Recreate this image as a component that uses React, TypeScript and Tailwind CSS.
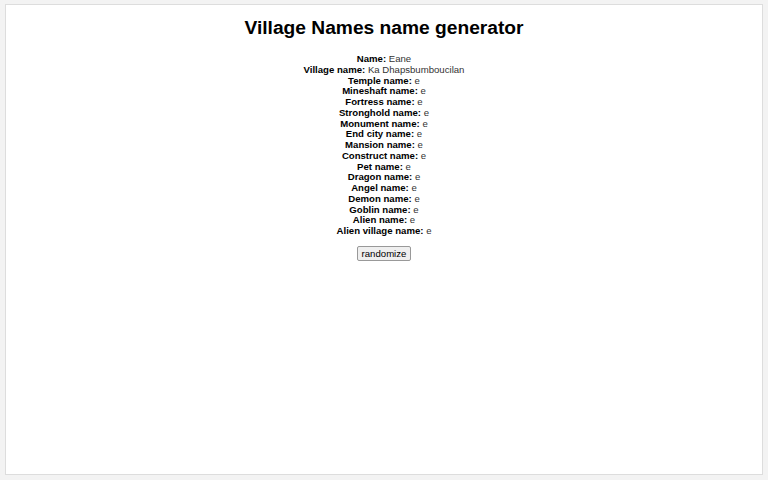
import { useState } from "react";

const fields = [
  "Village name",
  "Temple name",
  "Mineshaft name",
  "Fortress name",
  "Stronghold name",
  "Monument name",
  "End city name",
  "Mansion name",
  "Construct name",
  "Pet name",
  "Dragon name",
  "Angel name",
  "Demon name",
  "Goblin name",
  "Alien name",
  "Alien village name",
];

const syllables = ["ka", "dhaps", "bum", "bou", "ci", "lan", "e", "ane", "tor", "vel"];

function makeName() {
  const n = 2 + Math.floor(Math.random() * 3);
  let s = "";
  for (let i = 0; i < n; i++) s += syllables[Math.floor(Math.random() * syllables.length)];
  return s.charAt(0).toUpperCase() + s.slice(1);
}

export default function App() {
  const [values, setValues] = useState<Record<string, string>>(() => {
    const v: Record<string, string> = { Name: "Eane", "Village name": "Ka Dhapsbumboucilan" };
    fields.slice(1).forEach((f) => (v[f] = "e"));
    return v;
  });

  function randomize() {
    const v: Record<string, string> = { Name: makeName() };
    fields.forEach((f) => (v[f] = makeName()));
    setValues(v);
  }

  return (
    <div className="min-h-screen bg-[#f3f3f3] p-[4px_5px_5px_5px] font-['Liberation_Sans',Arial,sans-serif]">
      <div className="h-[471px] border border-[#dddddd] bg-white text-center text-black">
        <h1 className="mt-[12px] text-[19.2px] leading-[22px] font-bold">Village Names name generator</h1>
        <div className="mt-[15px] text-[9.6px] leading-[10.75px]">
          {["Name", ...fields].map((f) => (
            <div key={f} className="h-[10.75px]">
              <b>{f}:</b> <span className="text-[#333333]">{values[f]}</span>
            </div>
          ))}
        </div>
        <button
          onClick={randomize}
          className="mt-[9px] border border-[#999999] bg-[#efefef] px-[4px] py-[1px] text-[9.6px] leading-[11px] rounded-[2px] text-black"
        >
          randomize
        </button>
      </div>
    </div>
  );
}
